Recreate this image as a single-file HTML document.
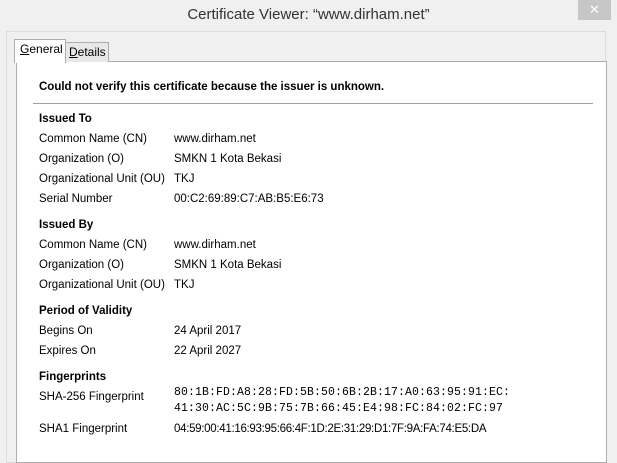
<!DOCTYPE html>
<html><head><style>
body{margin:0;width:617px;height:455px;background:#f0f0f0;font-family:"Liberation Sans",sans-serif;font-size:11.5px;color:#000;position:relative;overflow:hidden}
.t{position:absolute;white-space:nowrap}
.b{font-weight:bold}
.m{font-family:"Liberation Mono",monospace;font-size:11.5px;letter-spacing:0.1px}
</style></head><body>
<div class="t" style="left:0;width:617px;top:6px;text-align:center;font-size:15px;color:#333">Certificate Viewer: “www.dirham.net”</div>
<div style="position:absolute;left:578px;top:0;width:33px;height:20px;background:#c7c7c7;color:#fff;text-align:center;font-size:13px;line-height:20px">✕</div>
<div style="position:absolute;left:6px;top:31px;width:598px;height:430px;border:1px solid #dcdcdc"></div>
<div style="position:absolute;left:16px;top:61px;width:589px;height:400px;background:#fff;border:1px solid #adadad"></div>
<div style="position:absolute;left:65px;top:42px;width:42px;height:19px;border:1px solid #adadad;border-bottom:none;background:#e8e8e8"></div>
<div style="position:absolute;left:14px;top:39px;width:50px;height:23px;border:1px solid #adadad;border-bottom:none;background:#fff"></div>
<div class="t" style="left:20px;top:42px;font-size:12px"><u>G</u>eneral</div>
<div class="t" style="left:69px;top:45px;font-size:12px"><u>D</u>etails</div>
<div class="t b" style="left:39px;top:81px">Could not verify this certificate because the issuer is unknown.</div>
<div style="position:absolute;left:33px;top:103px;width:560px;height:1px;background:#a0a0a0"></div>
<div class="t b" style="left:39px;top:113px">Issued To</div>
<div class="t" style="left:39px;top:133px">Common Name (CN)</div><div class="t" style="left:174px;top:133px">www.dirham.net</div>
<div class="t" style="left:39px;top:153px">Organization (O)</div><div class="t" style="left:174px;top:153px">SMKN 1 Kota Bekasi</div>
<div class="t" style="left:39px;top:173px">Organizational Unit (OU)</div><div class="t" style="left:174px;top:173px">TKJ</div>
<div class="t" style="left:39px;top:193px">Serial Number</div><div class="t" style="left:174px;top:193px">00:C2:69:89:C7:AB:B5:E6:73</div>
<div class="t b" style="left:39px;top:219px">Issued By</div>
<div class="t" style="left:39px;top:239px">Common Name (CN)</div><div class="t" style="left:174px;top:239px">www.dirham.net</div>
<div class="t" style="left:39px;top:259px">Organization (O)</div><div class="t" style="left:174px;top:259px">SMKN 1 Kota Bekasi</div>
<div class="t" style="left:39px;top:279px">Organizational Unit (OU)</div><div class="t" style="left:174px;top:279px">TKJ</div>
<div class="t b" style="left:39px;top:305px">Period of Validity</div>
<div class="t" style="left:39px;top:325px">Begins On</div><div class="t" style="left:174px;top:325px">24 April 2017</div>
<div class="t" style="left:39px;top:345px">Expires On</div><div class="t" style="left:174px;top:345px">22 April 2027</div>
<div class="t b" style="left:39px;top:371px">Fingerprints</div>
<div class="t" style="left:39px;top:391px">SHA-256 Fingerprint</div>
<div class="t m" style="left:174px;top:386px">80:1B:FD:A8:28:FD:5B:50:6B:2B:17:A0:63:95:91:EC:</div>
<div class="t m" style="left:174px;top:402px">41:30:AC:5C:9B:75:7B:66:45:E4:98:FC:84:02:FC:97</div>
<div class="t" style="left:39px;top:423px">SHA1 Fingerprint</div><div class="t" style="left:174px;top:423px;letter-spacing:-0.3px">04:59:00:41:16:93:95:66:4F:1D:2E:31:29:D1:7F:9A:FA:74:E5:DA</div>
</body></html>
